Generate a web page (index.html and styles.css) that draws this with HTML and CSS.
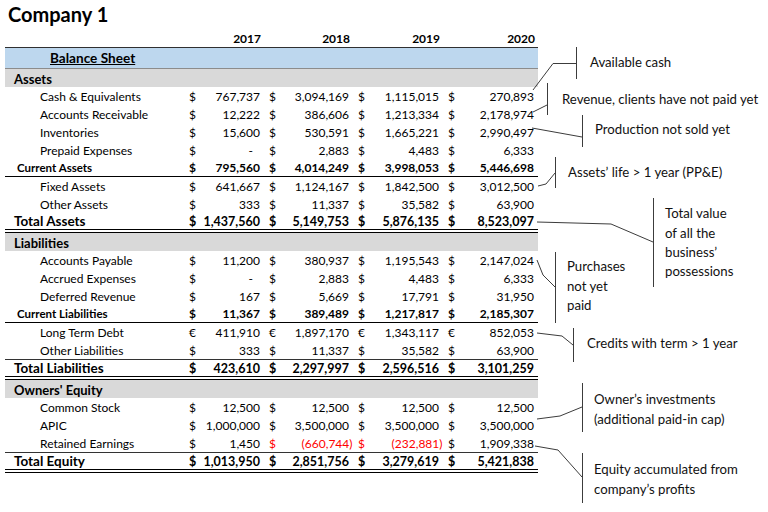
FILE: index.html
```html
<!DOCTYPE html>
<html>
<head>
  <meta charset="UTF-8">
  <meta name="viewport" content="width=device-width, initial-scale=1.0">
  <title>Company 1</title>
  <link rel="stylesheet" href="styles.css">
</head>
<body>
  <div class="page">
    <h1 class="title">Company 1</h1>

    <div class="sheet">
      <div class="row years">
        <div></div>
        <div class="yr">2017</div>
        <div class="yr">2018</div>
        <div class="yr">2019</div>
        <div class="yr">2020</div>
      </div>
      <div class="row banner"><div class="lbl">Balance Sheet</div></div>

      <!-- Assets -->
      <div class="row section top"><div class="lbl">Assets</div></div>
      <div class="row item">
        <div class="lbl">Cash &amp; Equivalents</div>
        <div class="amt"><span>$</span><span>767,737</span></div>
        <div class="amt"><span>$</span><span>3,094,169</span></div>
        <div class="amt"><span>$</span><span>1,115,015</span></div>
        <div class="amt"><span>$</span><span>270,893</span></div>
      </div>
      <div class="row item">
        <div class="lbl">Accounts Receivable</div>
        <div class="amt"><span>$</span><span>12,222</span></div>
        <div class="amt"><span>$</span><span>386,606</span></div>
        <div class="amt"><span>$</span><span>1,213,334</span></div>
        <div class="amt"><span>$</span><span>2,178,974</span></div>
      </div>
      <div class="row item">
        <div class="lbl">Inventories</div>
        <div class="amt"><span>$</span><span>15,600</span></div>
        <div class="amt"><span>$</span><span>530,591</span></div>
        <div class="amt"><span>$</span><span>1,665,221</span></div>
        <div class="amt"><span>$</span><span>2,990,497</span></div>
      </div>
      <div class="row item">
        <div class="lbl">Prepaid Expenses</div>
        <div class="amt"><span>$</span><span class="nil">-</span></div>
        <div class="amt"><span>$</span><span>2,883</span></div>
        <div class="amt"><span>$</span><span>4,483</span></div>
        <div class="amt"><span>$</span><span>6,333</span></div>
      </div>
      <div class="row sub line">
        <div class="lbl">Current Assets</div>
        <div class="amt"><span>$</span><span>795,560</span></div>
        <div class="amt"><span>$</span><span>4,014,249</span></div>
        <div class="amt"><span>$</span><span>3,998,053</span></div>
        <div class="amt"><span>$</span><span>5,446,698</span></div>
      </div>
      <div class="row item">
        <div class="lbl">Fixed Assets</div>
        <div class="amt"><span>$</span><span>641,667</span></div>
        <div class="amt"><span>$</span><span>1,124,167</span></div>
        <div class="amt"><span>$</span><span>1,842,500</span></div>
        <div class="amt"><span>$</span><span>3,012,500</span></div>
      </div>
      <div class="row item">
        <div class="lbl">Other Assets</div>
        <div class="amt"><span>$</span><span>333</span></div>
        <div class="amt"><span>$</span><span>11,337</span></div>
        <div class="amt"><span>$</span><span>35,582</span></div>
        <div class="amt"><span>$</span><span>63,900</span></div>
      </div>
      <div class="row total dbl">
        <div class="lbl">Total Assets</div>
        <div class="amt"><span>$</span><span>1,437,560</span></div>
        <div class="amt"><span>$</span><span>5,149,753</span></div>
        <div class="amt"><span>$</span><span>5,876,135</span></div>
        <div class="amt"><span>$</span><span>8,523,097</span></div>
      </div>

      <!-- Liabilities -->
      <div class="row section"><div class="lbl">Liabilities</div></div>
      <div class="row item">
        <div class="lbl">Accounts Payable</div>
        <div class="amt"><span>$</span><span>11,200</span></div>
        <div class="amt"><span>$</span><span>380,937</span></div>
        <div class="amt"><span>$</span><span>1,195,543</span></div>
        <div class="amt"><span>$</span><span>2,147,024</span></div>
      </div>
      <div class="row item">
        <div class="lbl">Accrued Expenses</div>
        <div class="amt"><span>$</span><span class="nil">-</span></div>
        <div class="amt"><span>$</span><span>2,883</span></div>
        <div class="amt"><span>$</span><span>4,483</span></div>
        <div class="amt"><span>$</span><span>6,333</span></div>
      </div>
      <div class="row item">
        <div class="lbl">Deferred Revenue</div>
        <div class="amt"><span>$</span><span>167</span></div>
        <div class="amt"><span>$</span><span>5,669</span></div>
        <div class="amt"><span>$</span><span>17,791</span></div>
        <div class="amt"><span>$</span><span>31,950</span></div>
      </div>
      <div class="row sub line">
        <div class="lbl">Current Liabilities</div>
        <div class="amt"><span>$</span><span>11,367</span></div>
        <div class="amt"><span>$</span><span>389,489</span></div>
        <div class="amt"><span>$</span><span>1,217,817</span></div>
        <div class="amt"><span>$</span><span>2,185,307</span></div>
      </div>
      <div class="row item">
        <div class="lbl">Long Term Debt</div>
        <div class="amt"><span>€</span><span>411,910</span></div>
        <div class="amt"><span>€</span><span>1,897,170</span></div>
        <div class="amt"><span>€</span><span>1,343,117</span></div>
        <div class="amt"><span>€</span><span>852,053</span></div>
      </div>
      <div class="row item">
        <div class="lbl">Other Liabilities</div>
        <div class="amt"><span>$</span><span>333</span></div>
        <div class="amt"><span>$</span><span>11,337</span></div>
        <div class="amt"><span>$</span><span>35,582</span></div>
        <div class="amt"><span>$</span><span>63,900</span></div>
      </div>
      <div class="row total dbl rule">
        <div class="lbl">Total Liabilities</div>
        <div class="amt"><span>$</span><span>423,610</span></div>
        <div class="amt"><span>$</span><span>2,297,997</span></div>
        <div class="amt"><span>$</span><span>2,596,516</span></div>
        <div class="amt"><span>$</span><span>3,101,259</span></div>
      </div>

      <!-- Owners' Equity -->
      <div class="row section"><div class="lbl">Owners' Equity</div></div>
      <div class="row item">
        <div class="lbl">Common Stock</div>
        <div class="amt"><span>$</span><span>12,500</span></div>
        <div class="amt"><span>$</span><span>12,500</span></div>
        <div class="amt"><span>$</span><span>12,500</span></div>
        <div class="amt"><span>$</span><span>12,500</span></div>
      </div>
      <div class="row item">
        <div class="lbl">APIC</div>
        <div class="amt"><span>$</span><span>1,000,000</span></div>
        <div class="amt"><span>$</span><span>3,500,000</span></div>
        <div class="amt"><span>$</span><span>3,500,000</span></div>
        <div class="amt"><span>$</span><span>3,500,000</span></div>
      </div>
      <div class="row item">
        <div class="lbl">Retained Earnings</div>
        <div class="amt"><span>$</span><span>1,450</span></div>
        <div class="amt neg"><span>$</span><span>(660,744)</span></div>
        <div class="amt neg"><span>$</span><span>(232,881)</span></div>
        <div class="amt"><span>$</span><span>1,909,338</span></div>
      </div>
      <div class="row total dbl rule">
        <div class="lbl">Total Equity</div>
        <div class="amt"><span>$</span><span>1,013,950</span></div>
        <div class="amt"><span>$</span><span>2,851,756</span></div>
        <div class="amt"><span>$</span><span>3,279,619</span></div>
        <div class="amt"><span>$</span><span>5,421,838</span></div>
      </div>
    </div>

    <!-- callouts drawn over the right side of the sheet -->
    <div class="notes">
      <svg class="leaders" width="768" height="512" viewBox="0 0 768 512">
        <g fill="none" stroke="#3c3c3c" stroke-width="1">
          <path d="M576.5 47v32"/>
          <polyline points="533,90 553,63.5 576,63.5"/>
          <path d="M547.5 83v32"/>
          <polyline points="533,112 547,105"/>
          <path d="M582.5 115v32"/>
          <polyline points="532,128 582,137"/>
          <path d="M555.5 157v31"/>
          <polyline points="538,186 546,184 555,173"/>
          <path d="M653.5 198v89"/>
          <polyline points="537,222 611,224 653,242"/>
          <path d="M555.5 252v71"/>
          <polyline points="537,260 543,275 555,287"/>
          <path d="M573.5 328v34"/>
          <polyline points="537,333 562,336 573,345"/>
          <path d="M582.5 383v49"/>
          <polyline points="537,419 560,416 582,407"/>
          <path d="M582.5 453v50"/>
          <polyline points="535,446 558,450 582,477"/>
        </g>
      </svg>
      <div class="note n-cash">Available cash</div>
      <div class="note n-rev">Revenue, clients have not paid yet</div>
      <div class="note n-prod">Production not sold yet</div>
      <div class="note n-life">Assets’ life &gt; 1 year (PP&amp;E)</div>
      <div class="note n-total">Total value<br>of all the<br>business’<br>possessions</div>
      <div class="note n-purch">Purchases<br>not yet<br>paid</div>
      <div class="note n-credit">Credits with term &gt; 1 year</div>
      <div class="note n-owner">Owner’s investments<br>(additional paid-in cap)</div>
      <div class="note n-equity">Equity accumulated from<br>company’s profits</div>
    </div>
  </div>
</body>
</html>
```

FILE: styles.css
```css
body {
  margin: 0;
  font-family: Lato, "Open Sans", sans-serif;
  color: #000;
  background: #fff;
}
.page {
  position: relative;
  width: 768px;
  height: 512px;
  overflow: hidden;
}
.title {
  margin: 0;
  height: 29px;
  padding-left: 8px;
  font-size: 20px;
  line-height: 29px;
  font-weight: 700;
}

/* sheet */
.sheet {
  width: 533px;
  margin-left: 5px;
  font-size: 12px;
}
.row {
  display: grid;
  grid-template-columns: 179px 80px 89px 90px 95px;
  align-items: end;
  box-sizing: border-box;
  height: 18px;
  line-height: 16px;
  white-space: nowrap;
}
.years {
  font-weight: 700;
}
.yr {
  text-align: right;
  padding-right: 3px;
}
.banner {
  height: 20.7px;
  align-items: center;
  border-top: 1px solid #303030;
  background: #bdd7ee;
}
.banner .lbl {
  grid-column: 1 / -1;
  padding-left: 45px;
  font-size: 13.6px;
  font-weight: 700;
  text-decoration: underline;
}
.section {
  background: #d9d9d9;
  font-size: 13px;
  font-weight: 700;
}
.section .lbl {
  grid-column: 1 / -1;
  padding-left: 9px;
}
.section.top {
  height: 19px;
  border-top: 1px solid #8c8c8c;
}
.item .lbl {
  padding-left: 35px;
}
.sub {
  font-weight: 700;
}
.sub .lbl {
  padding-left: 12px;
  font-size: 11.5px;
}
.total {
  font-weight: 700;
  font-size: 12.5px;
}
.total .lbl {
  padding-left: 9px;
  font-size: 13.5px;
}
.line {
  border-bottom: 1.5px solid #000;
}
.dbl {
  height: 20.8px;
  line-height: 15px;
  border-bottom: 4px double #000;
}
.rule {
  border-top: 1px solid #333;
}

/* accounting cells */
.amt {
  display: flex;
  justify-content: space-between;
  padding: 0 4px 0 5px;
}
.nil {
  padding-right: 7px;
}
.neg {
  color: #ff0000;
}
.neg span:last-child {
  margin-right: -3.5px;
}

/* callouts */
.notes {
  position: absolute;
  top: 0;
  left: 0;
  width: 768px;
  height: 512px;
  pointer-events: none;
}
.leaders {
  position: absolute;
  top: 0;
  left: 0;
}
.note {
  position: absolute;
  font-size: 13.2px;
  line-height: 19.3px;
  white-space: nowrap;
  color: #111;
}
.n-cash { left: 590px; top: 53.4px; }
.n-rev { left: 562px; top: 90.4px; }
.n-prod { left: 595px; top: 120.4px; }
.n-life { left: 568px; top: 163.4px; }
.n-total { left: 665px; top: 204.4px; }
.n-purch { left: 567px; top: 257.4px; }
.n-credit { left: 587px; top: 334.4px; }
.n-owner { left: 594px; top: 390.4px; }
.n-equity { left: 594px; top: 460.4px; }
```
